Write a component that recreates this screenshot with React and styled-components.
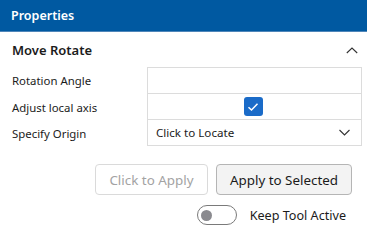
import React from "react";
import styled, { createGlobalStyle } from "styled-components";

const Global = createGlobalStyle`
  html, body { margin: 0; padding: 0; background: #fff; }
  body { font-family: "Segoe UI", "Noto Sans", sans-serif; color: #1b1b1b; }
  * { box-sizing: border-box; }
`;

const Panel = styled.div`
  width: 367px;
  height: 244px;
  background: #fff;
  display: flex;
  flex-direction: column;
`;

const Header = styled.div`
  height: 32px;
  background: #0059a1;
  color: #fff;
  font-size: 12.5px;
  font-weight: 600;
  display: flex;
  align-items: center;
  padding: 0 11px;
  border-bottom: 1px solid #4f86b9;
`;

const SectionHead = styled.div`
  height: 35px;
  display: flex;
  align-items: center;
  justify-content: space-between;
  padding: 1px 9px 0 12px;
  font-size: 13px;
  font-weight: 600;
`;

const Grid = styled.div`
  display: grid;
  grid-template-columns: 135px 215px;
  margin-left: 12px;
`;

const Label = styled.div`
  height: 26px;
  display: flex;
  align-items: center;
  font-size: 11.4px;
`;

const Cell = styled.div`
  height: ${(p) => (p.$first ? 27 : 26)}px;
  border: 1px solid #dcdcdc;
  border-top: ${(p) => (p.$first ? "1px solid #dcdcdc" : "none")};
  display: flex;
  align-items: center;
  justify-content: ${(p) => p.$justify || "flex-start"};
  padding: 0 11px 0 8px;
  font-size: 11.6px;
`;

const Check = styled.div`
  width: 19px;
  height: 19px;
  border-radius: 3px;
  background: #1a6bc8;
  display: flex;
  align-items: center;
  justify-content: center;
`;

const SelectText = styled.div`
  flex: 1;
`;

const Buttons = styled.div`
  display: flex;
  justify-content: flex-end;
  gap: 8px;
  padding: 18px 15px 0 0;
`;

const Button = styled.button`
  height: 31px;
  padding: 0;
  width: ${(p) => p.$w}px;
  font-family: inherit;
  font-size: 13.4px;
  border-radius: 4px;
  border: 1px solid ${(p) => (p.$disabled ? "#dadada" : "#b5b5b5")};
  background: ${(p) => (p.$disabled ? "#fff" : "#f3f3f3")};
  color: ${(p) => (p.$disabled ? "#a3a3a3" : "#1b1b1b")};
`;

const ToggleRow = styled.div`
  display: flex;
  justify-content: flex-end;
  align-items: center;
  gap: 13px;
  padding: 10px 0 0 0;
  margin-right: 21px;
  font-size: 12.6px;
`;

const Toggle = styled.div`
  width: 40px;
  height: 20px;
  border: 1px solid #7a7a7a;
  border-radius: 10px;
  display: flex;
  align-items: center;
  padding-left: 3px;
`;

const Knob = styled.div`
  width: 11px;
  height: 11px;
  border-radius: 50%;
  background: #8a8a8f;
`;

export default function App() {
  return (
    <Panel>
      <Global />
      <Header>Properties</Header>
      <SectionHead>
        Move Rotate
        <svg width="12" height="7" viewBox="0 0 12 7">
          <path d="M0.8 6 L6 1 L11.2 6" fill="none" stroke="#333" strokeWidth="1.1" />
        </svg>
      </SectionHead>
      <Grid>
        <Label>Rotation Angle</Label>
        <Cell $first />
        <Label>Adjust local axis</Label>
        <Cell $justify="center">
          <Check>
            <svg width="12" height="10" viewBox="0 0 12 10">
              <path d="M1.5 5.2 L4.5 8 L10.5 1.8" fill="none" stroke="#fff" strokeWidth="1.5" />
            </svg>
          </Check>
        </Cell>
        <Label>Specify Origin</Label>
        <Cell>
          <SelectText>Click to Locate</SelectText>
          <svg width="11" height="7" viewBox="0 0 11 7">
            <path d="M0.5 1 L5.5 6 L10.5 1" fill="none" stroke="#333" strokeWidth="1.1" />
          </svg>
        </Cell>
      </Grid>
      <Buttons>
        <Button $disabled $w={113}>Click to Apply</Button>
        <Button $w={136}>Apply to Selected</Button>
      </Buttons>
      <ToggleRow>
        <Toggle>
          <Knob />
        </Toggle>
        Keep Tool Active
      </ToggleRow>
    </Panel>
  );
}
